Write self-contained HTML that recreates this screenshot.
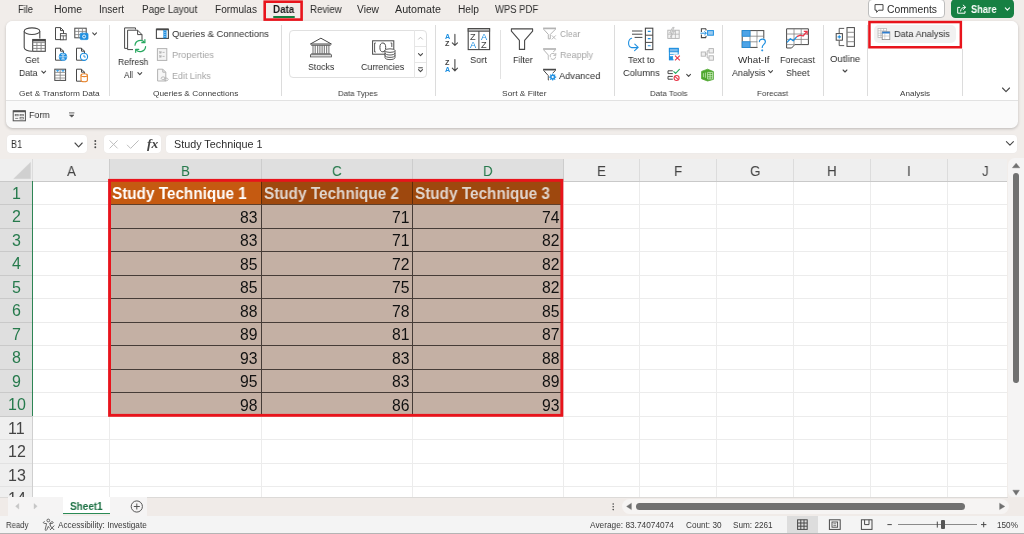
<!DOCTYPE html>
<html lang="en"><head><meta charset="utf-8"><title>Excel - Data Analysis</title>
<style>
html,body{margin:0;padding:0;}
body{width:1024px;height:534px;overflow:hidden;position:relative;background:#f1edea;font-family:"Liberation Sans",sans-serif;}
.t{will-change:transform;position:absolute;white-space:nowrap;line-height:1;transform-origin:0 50%;display:block;}
.r{position:absolute;box-sizing:border-box;}
svg{position:absolute;overflow:visible;}
</style></head><body>
<div id="tabs">
<span class="t " style="left:17.60px;top:5px;font-size:10px;color:#2b2b2b;transform:scaleX(0.9309);">File</span>
<span class="t " style="left:54.00px;top:5px;font-size:10px;color:#2b2b2b;transform:scaleX(1.0497);">Home</span>
<span class="t " style="left:98.80px;top:5px;font-size:10px;color:#2b2b2b;transform:scaleX(0.9836);">Insert</span>
<span class="t " style="left:141.90px;top:5px;font-size:10px;color:#2b2b2b;transform:scaleX(0.9847);">Page Layout</span>
<span class="t " style="left:214.80px;top:5px;font-size:10px;color:#2b2b2b;transform:scaleX(1.0078);">Formulas</span>
<span class="t " style="left:309.50px;top:5px;font-size:10px;color:#2b2b2b;transform:scaleX(0.9699);">Review</span>
<span class="t " style="left:357.00px;top:5px;font-size:10px;color:#2b2b2b;transform:scaleX(1.0235);">View</span>
<span class="t " style="left:395.30px;top:5px;font-size:10px;color:#2b2b2b;transform:scaleX(1.0724);">Automate</span>
<span class="t " style="left:458.00px;top:5px;font-size:10px;color:#2b2b2b;transform:scaleX(1.0211);">Help</span>
<span class="t " style="left:494.50px;top:5px;font-size:10px;color:#2b2b2b;transform:scaleX(0.9461);">WPS PDF</span>
<span class="t " style="left:273.00px;top:5px;font-size:10px;color:#1a1a1a;font-weight:700;transform:scaleX(0.9781);">Data</span>
<div class="r " style="left:272.6px;top:16.4px;width:22.2px;height:1.7px;background:#16803f;border-radius:1px;"></div>
<div class="r " style="left:868px;top:-1px;width:76.5px;height:18.6px;background:#ffffff;border:1px solid #bdbdbd;border-radius:4px;"></div>
<span class="t " style="left:887.10px;top:5px;font-size:10px;color:#2b2b2b;transform:scaleX(1.0342);">Comments</span>
<div class="r " style="left:951.2px;top:-1px;width:63.3px;height:18.7px;background:#178043;border-radius:4.5px;"></div>
<span class="t " style="left:970.50px;top:5px;font-size:10px;color:#ffffff;font-weight:700;transform:scaleX(0.9211);">Share</span>
</div>
<div id="ribbon">
<div class="r " style="left:6.4px;top:21px;width:1011.7px;height:107.2px;background:#fafafa;border-radius:6.5px;box-shadow:0 1px 3px rgba(0,0,0,.22);"></div>
<div class="r " style="left:6.4px;top:21px;width:1011.7px;height:79.5px;background:#ffffff;border-radius:6.5px 6.5px 0 0;"></div>
<div class="r " style="left:6.4px;top:100px;width:1011.7px;height:1px;background:#e2e2e2;"></div>
<div class="r " style="left:109.2px;top:25px;width:1px;height:70.5px;background:#dcdcdc;"></div>
<div class="r " style="left:281.1px;top:25px;width:1px;height:70.5px;background:#dcdcdc;"></div>
<div class="r " style="left:434.5px;top:25px;width:1px;height:70.5px;background:#dcdcdc;"></div>
<div class="r " style="left:613.9px;top:25px;width:1px;height:70.5px;background:#dcdcdc;"></div>
<div class="r " style="left:721.8px;top:25px;width:1px;height:70.5px;background:#dcdcdc;"></div>
<div class="r " style="left:822.7px;top:25px;width:1px;height:70.5px;background:#dcdcdc;"></div>
<div class="r " style="left:867.1px;top:25px;width:1px;height:70.5px;background:#dcdcdc;"></div>
<div class="r " style="left:962px;top:49px;width:1px;height:46.5px;background:#dcdcdc;"></div>
<div class="r " style="left:500.2px;top:30px;width:1px;height:49px;background:#e2e2e2;"></div>
<span class="t " style="left:18.80px;top:90px;font-size:8.1px;color:#3a3a3a;transform:scaleX(1.0257);">Get &amp; Transform Data</span>
<span class="t " style="left:152.60px;top:90px;font-size:8.1px;color:#3a3a3a;transform:scaleX(1.0253);">Queries &amp; Connections</span>
<span class="t " style="left:338.30px;top:90px;font-size:8.1px;color:#3a3a3a;transform:scaleX(0.9651);">Data Types</span>
<span class="t " style="left:502.00px;top:90px;font-size:8.1px;color:#3a3a3a;transform:scaleX(1.0431);">Sort &amp; Filter</span>
<span class="t " style="left:649.50px;top:90px;font-size:8.1px;color:#3a3a3a;transform:scaleX(0.9837);">Data Tools</span>
<span class="t " style="left:757.00px;top:90px;font-size:8.1px;color:#3a3a3a;transform:scaleX(0.9838);">Forecast</span>
<span class="t " style="left:900.30px;top:90px;font-size:8.1px;color:#3a3a3a;transform:scaleX(0.9847);">Analysis</span>
<span class="t " style="left:25.10px;top:55px;font-size:9.8px;color:#2e2e2e;transform:scaleX(0.8990);">Get</span>
<span class="t " style="left:19.00px;top:68px;font-size:9.8px;color:#2e2e2e;transform:scaleX(0.8889);">Data</span>
<span class="t " style="left:118.20px;top:57px;font-size:9.8px;color:#2e2e2e;transform:scaleX(0.8859);">Refresh</span>
<span class="t " style="left:124.00px;top:70px;font-size:9.8px;color:#2e2e2e;transform:scaleX(0.8447);">All</span>
<span class="t " style="left:172.00px;top:29px;font-size:9.8px;color:#2e2e2e;transform:scaleX(0.9625);">Queries &amp; Connections</span>
<span class="t " style="left:172.00px;top:50px;font-size:9.8px;color:#a6a6a6;transform:scaleX(0.9381);">Properties</span>
<span class="t " style="left:172.00px;top:71px;font-size:9.8px;color:#a6a6a6;transform:scaleX(0.9132);">Edit Links</span>
<div class="r " style="left:289px;top:29.6px;width:137.7px;height:48.7px;background:#ffffff;border:1px solid #e0e0e0;border-radius:4px;"></div>
<div class="r " style="left:414.2px;top:30px;width:1px;height:48px;background:#e6e6e6;"></div>
<div class="r " style="left:414.6px;top:46px;width:11.5px;height:1px;background:#e6e6e6;"></div>
<div class="r " style="left:414.6px;top:62px;width:11.5px;height:1px;background:#e6e6e6;"></div>
<span class="t " style="left:308.00px;top:62px;font-size:9.8px;color:#2e2e2e;transform:scaleX(0.8943);">Stocks</span>
<span class="t " style="left:361.40px;top:62px;font-size:9.8px;color:#2e2e2e;transform:scaleX(0.9117);">Currencies</span>
<span class="t " style="left:470.30px;top:55px;font-size:9.8px;color:#2e2e2e;transform:scaleX(0.9459);">Sort</span>
<span class="t " style="left:512.50px;top:55px;font-size:9.8px;color:#2e2e2e;transform:scaleX(0.9092);">Filter</span>
<span class="t " style="left:559.70px;top:29px;font-size:9.8px;color:#a6a6a6;transform:scaleX(0.8583);">Clear</span>
<span class="t " style="left:559.70px;top:50px;font-size:9.8px;color:#a6a6a6;transform:scaleX(0.9206);">Reapply</span>
<span class="t " style="left:559.30px;top:71px;font-size:9.8px;color:#2e2e2e;transform:scaleX(0.9475);">Advanced</span>
<span class="t " style="left:628.40px;top:55px;font-size:9.8px;color:#2e2e2e;transform:scaleX(0.9179);">Text to</span>
<span class="t " style="left:623.00px;top:68px;font-size:9.8px;color:#2e2e2e;transform:scaleX(0.9542);">Columns</span>
<span class="t " style="left:737.50px;top:55px;font-size:9.8px;color:#2e2e2e;transform:scaleX(0.9847);">What-If</span>
<span class="t " style="left:731.60px;top:68px;font-size:9.8px;color:#2e2e2e;transform:scaleX(0.9153);">Analysis</span>
<span class="t " style="left:780.10px;top:55px;font-size:9.8px;color:#2e2e2e;transform:scaleX(0.9128);">Forecast</span>
<span class="t " style="left:785.80px;top:68px;font-size:9.8px;color:#2e2e2e;transform:scaleX(0.9059);">Sheet</span>
<span class="t " style="left:830.00px;top:54px;font-size:9.8px;color:#2e2e2e;transform:scaleX(0.9758);">Outline</span>
<div class="r " style="left:874.4px;top:25.1px;width:82.1px;height:17.5px;background:#f1f1f1;border-radius:5px;"></div>
<span class="t " style="left:893.50px;top:29px;font-size:9.8px;color:#2e2e2e;transform:scaleX(0.9381);">Data Analysis</span>
<span class="t " style="left:29.40px;top:110px;font-size:9.8px;color:#2e2e2e;transform:scaleX(0.9097);">Form</span>
</div>
<div id="formulabar">
<div class="r " style="left:7.2px;top:135.3px;width:79.6px;height:17.5px;background:#ffffff;border-radius:4px;box-shadow:0 0 0 .5px #ece9e7;"></div>
<span class="t " style="left:10.90px;top:140px;font-size:10.4px;color:#2e2e2e;transform:scaleX(0.8726);">B1</span>
<div class="r " style="left:103.75px;top:135.3px;width:57.6px;height:17.5px;background:#ffffff;border-radius:4px;box-shadow:0 0 0 .5px #ece9e7;"></div>
<div class="r " style="left:165.9px;top:135.3px;width:851.2px;height:17.5px;background:#ffffff;border-radius:4px;box-shadow:0 0 0 .5px #ece9e7;"></div>
<span class="t " style="left:174.30px;top:140px;font-size:10.4px;color:#2e2e2e;transform:scaleX(1.0377);">Study Technique 1</span>
</div>
<div id="grid">
<div class="r " style="left:0px;top:159px;width:1007px;height:338px;background:#ffffff;"></div>
<div class="r " style="left:0px;top:159px;width:1007px;height:22px;background:#efefef;"></div>
<div class="r " style="left:0px;top:181px;width:32.6px;height:316px;background:#efefef;"></div>
<div class="r " style="left:109.5px;top:159px;width:453.5px;height:22px;background:#dfdfdf;"></div>
<div class="r " style="left:0px;top:181px;width:32.6px;height:235px;background:#dfdfdf;"></div>
<div class="r " style="left:32.1px;top:181px;width:1px;height:316px;background:#ececec;"></div>
<div class="r " style="left:32.1px;top:159px;width:1px;height:22px;background:#dcdcdc;"></div>
<div class="r " style="left:109.0px;top:181px;width:1px;height:316px;background:#ececec;"></div>
<div class="r " style="left:109.0px;top:159px;width:1px;height:22px;background:#cdcdcd;"></div>
<div class="r " style="left:260.75px;top:181px;width:1px;height:316px;background:#ececec;"></div>
<div class="r " style="left:260.75px;top:159px;width:1px;height:22px;background:#cdcdcd;"></div>
<div class="r " style="left:412.0px;top:181px;width:1px;height:316px;background:#ececec;"></div>
<div class="r " style="left:412.0px;top:159px;width:1px;height:22px;background:#cdcdcd;"></div>
<div class="r " style="left:562.5px;top:181px;width:1px;height:316px;background:#ececec;"></div>
<div class="r " style="left:562.5px;top:159px;width:1px;height:22px;background:#cdcdcd;"></div>
<div class="r " style="left:639.0px;top:181px;width:1px;height:316px;background:#ececec;"></div>
<div class="r " style="left:639.0px;top:159px;width:1px;height:22px;background:#dcdcdc;"></div>
<div class="r " style="left:716.0px;top:181px;width:1px;height:316px;background:#ececec;"></div>
<div class="r " style="left:716.0px;top:159px;width:1px;height:22px;background:#dcdcdc;"></div>
<div class="r " style="left:793.0px;top:181px;width:1px;height:316px;background:#ececec;"></div>
<div class="r " style="left:793.0px;top:159px;width:1px;height:22px;background:#dcdcdc;"></div>
<div class="r " style="left:869.5px;top:181px;width:1px;height:316px;background:#ececec;"></div>
<div class="r " style="left:869.5px;top:159px;width:1px;height:22px;background:#dcdcdc;"></div>
<div class="r " style="left:946.5px;top:181px;width:1px;height:316px;background:#ececec;"></div>
<div class="r " style="left:946.5px;top:159px;width:1px;height:22px;background:#dcdcdc;"></div>
<div class="r " style="left:32.6px;top:180.5px;width:974.4px;height:1px;background:#ececec;"></div>
<div class="r " style="left:0px;top:180.5px;width:32.6px;height:1px;background:#c9c9c9;"></div>
<div class="r " style="left:32.6px;top:204.0px;width:974.4px;height:1px;background:#ececec;"></div>
<div class="r " style="left:0px;top:204.0px;width:32.6px;height:1px;background:#c9c9c9;"></div>
<div class="r " style="left:32.6px;top:227.5px;width:974.4px;height:1px;background:#ececec;"></div>
<div class="r " style="left:0px;top:227.5px;width:32.6px;height:1px;background:#c9c9c9;"></div>
<div class="r " style="left:32.6px;top:251.0px;width:974.4px;height:1px;background:#ececec;"></div>
<div class="r " style="left:0px;top:251.0px;width:32.6px;height:1px;background:#c9c9c9;"></div>
<div class="r " style="left:32.6px;top:274.5px;width:974.4px;height:1px;background:#ececec;"></div>
<div class="r " style="left:0px;top:274.5px;width:32.6px;height:1px;background:#c9c9c9;"></div>
<div class="r " style="left:32.6px;top:298.0px;width:974.4px;height:1px;background:#ececec;"></div>
<div class="r " style="left:0px;top:298.0px;width:32.6px;height:1px;background:#c9c9c9;"></div>
<div class="r " style="left:32.6px;top:321.5px;width:974.4px;height:1px;background:#ececec;"></div>
<div class="r " style="left:0px;top:321.5px;width:32.6px;height:1px;background:#c9c9c9;"></div>
<div class="r " style="left:32.6px;top:345.0px;width:974.4px;height:1px;background:#ececec;"></div>
<div class="r " style="left:0px;top:345.0px;width:32.6px;height:1px;background:#c9c9c9;"></div>
<div class="r " style="left:32.6px;top:368.5px;width:974.4px;height:1px;background:#ececec;"></div>
<div class="r " style="left:0px;top:368.5px;width:32.6px;height:1px;background:#c9c9c9;"></div>
<div class="r " style="left:32.6px;top:392.0px;width:974.4px;height:1px;background:#ececec;"></div>
<div class="r " style="left:0px;top:392.0px;width:32.6px;height:1px;background:#c9c9c9;"></div>
<div class="r " style="left:32.6px;top:415.5px;width:974.4px;height:1px;background:#ececec;"></div>
<div class="r " style="left:0px;top:415.5px;width:32.6px;height:1px;background:#c9c9c9;"></div>
<div class="r " style="left:32.6px;top:439.0px;width:974.4px;height:1px;background:#ececec;"></div>
<div class="r " style="left:0px;top:439.0px;width:32.6px;height:1px;background:#e2e2e2;"></div>
<div class="r " style="left:32.6px;top:462.5px;width:974.4px;height:1px;background:#ececec;"></div>
<div class="r " style="left:0px;top:462.5px;width:32.6px;height:1px;background:#e2e2e2;"></div>
<div class="r " style="left:32.6px;top:486.0px;width:974.4px;height:1px;background:#ececec;"></div>
<div class="r " style="left:0px;top:486.0px;width:32.6px;height:1px;background:#e2e2e2;"></div>
<div class="r " style="left:32.6px;top:509.5px;width:974.4px;height:1px;background:#ececec;"></div>
<div class="r " style="left:0px;top:509.5px;width:32.6px;height:1px;background:#e2e2e2;"></div>
<div class="r " style="left:0px;top:180.5px;width:1007px;height:1px;background:#c9c9c9;"></div>
<div class="r " style="left:32.1px;top:181px;width:1px;height:316px;background:#cfcfcf;"></div>
<div class="r " style="left:109.5px;top:180px;width:453.5px;height:1.5px;background:#8fbf9f;"></div>
<div class="r " style="left:31.9px;top:181px;width:1.5px;height:235px;background:#2e8555;"></div>
<span class="t " style="left:66.69px;top:163px;font-size:15.2px;color:#444444;transform:scaleX(0.8800);">A</span>
<span class="t " style="left:181.01px;top:163px;font-size:15.2px;color:#267a4c;transform:scaleX(0.8800);">B</span>
<span class="t " style="left:332.15px;top:163px;font-size:15.2px;color:#267a4c;transform:scaleX(0.8800);">C</span>
<span class="t " style="left:483.02px;top:163px;font-size:15.2px;color:#267a4c;transform:scaleX(0.8800);">D</span>
<span class="t " style="left:596.89px;top:163px;font-size:15.2px;color:#444444;transform:scaleX(0.8800);">E</span>
<span class="t " style="left:674.01px;top:163px;font-size:15.2px;color:#444444;transform:scaleX(0.8800);">F</span>
<span class="t " style="left:749.90px;top:163px;font-size:15.2px;color:#444444;transform:scaleX(0.8800);">G</span>
<span class="t " style="left:827.02px;top:163px;font-size:15.2px;color:#444444;transform:scaleX(0.8800);">H</span>
<span class="t " style="left:906.74px;top:163px;font-size:15.2px;color:#444444;transform:scaleX(0.8800);">I</span>
<span class="t " style="left:982.26px;top:163px;font-size:15.2px;color:#444444;transform:scaleX(0.8800);">J</span>
<span class="t " style="left:11.95px;top:186px;font-size:16px;color:#267a4c;">1</span>
<span class="t " style="left:11.95px;top:209px;font-size:16px;color:#267a4c;">2</span>
<span class="t " style="left:11.95px;top:233px;font-size:16px;color:#267a4c;">3</span>
<span class="t " style="left:11.95px;top:256px;font-size:16px;color:#267a4c;">4</span>
<span class="t " style="left:11.95px;top:280px;font-size:16px;color:#267a4c;">5</span>
<span class="t " style="left:11.95px;top:303px;font-size:16px;color:#267a4c;">6</span>
<span class="t " style="left:11.95px;top:327px;font-size:16px;color:#267a4c;">7</span>
<span class="t " style="left:11.95px;top:350px;font-size:16px;color:#267a4c;">8</span>
<span class="t " style="left:11.95px;top:374px;font-size:16px;color:#267a4c;">9</span>
<span class="t " style="left:7.50px;top:397px;font-size:16px;color:#267a4c;">10</span>
<span class="t " style="left:8.10px;top:421px;font-size:16px;color:#444444;">11</span>
<span class="t " style="left:7.50px;top:444px;font-size:16px;color:#444444;">12</span>
<span class="t " style="left:7.50px;top:468px;font-size:16px;color:#444444;">13</span>
<span class="t " style="left:7.50px;top:491px;font-size:16px;color:#444444;">14</span>
<div class="r " style="left:109.5px;top:181px;width:453.5px;height:235px;background:#c4b0a4;"></div>
<div class="r " style="left:109.5px;top:181px;width:151.75px;height:23.5px;background:#c55a11;"></div>
<div class="r " style="left:261.25px;top:181px;width:301.75px;height:23.5px;background:#9e480e;"></div>
<div class="r " style="left:260.75px;top:181px;width:1px;height:235px;background:#463c37;"></div>
<div class="r " style="left:260.75px;top:181px;width:1px;height:23.5px;background:#5e2c0a;"></div>
<div class="r " style="left:412.0px;top:181px;width:1px;height:235px;background:#463c37;"></div>
<div class="r " style="left:412.0px;top:181px;width:1px;height:23.5px;background:#5e2c0a;"></div>
<div class="r " style="left:109.5px;top:204.0px;width:453.5px;height:1px;background:#5f3f2b;"></div>
<div class="r " style="left:109.5px;top:227.5px;width:453.5px;height:1px;background:#463c37;"></div>
<div class="r " style="left:109.5px;top:251.0px;width:453.5px;height:1px;background:#463c37;"></div>
<div class="r " style="left:109.5px;top:274.5px;width:453.5px;height:1px;background:#463c37;"></div>
<div class="r " style="left:109.5px;top:298.0px;width:453.5px;height:1px;background:#463c37;"></div>
<div class="r " style="left:109.5px;top:321.5px;width:453.5px;height:1px;background:#463c37;"></div>
<div class="r " style="left:109.5px;top:345.0px;width:453.5px;height:1px;background:#463c37;"></div>
<div class="r " style="left:109.5px;top:368.5px;width:453.5px;height:1px;background:#463c37;"></div>
<div class="r " style="left:109.5px;top:392.0px;width:453.5px;height:1px;background:#463c37;"></div>
<span class="t " style="left:112.20px;top:186px;font-size:15.6px;color:#ffffff;font-weight:700;transform:scaleX(0.9802);">Study Technique 1</span>
<span class="t " style="left:263.50px;top:186px;font-size:15.6px;color:#e0d5cd;font-weight:700;transform:scaleX(0.9816);">Study Technique 2</span>
<span class="t " style="left:414.80px;top:186px;font-size:15.6px;color:#e0d5cd;font-weight:700;transform:scaleX(0.9816);">Study Technique 3</span>
<span class="t " style="left:240.39px;top:210px;font-size:15.7px;color:#111111;">83</span>
<span class="t " style="left:391.64px;top:210px;font-size:15.7px;color:#111111;">71</span>
<span class="t " style="left:542.14px;top:210px;font-size:15.7px;color:#111111;">74</span>
<span class="t " style="left:240.39px;top:233px;font-size:15.7px;color:#111111;">83</span>
<span class="t " style="left:391.64px;top:233px;font-size:15.7px;color:#111111;">71</span>
<span class="t " style="left:542.14px;top:233px;font-size:15.7px;color:#111111;">82</span>
<span class="t " style="left:240.39px;top:257px;font-size:15.7px;color:#111111;">85</span>
<span class="t " style="left:391.64px;top:257px;font-size:15.7px;color:#111111;">72</span>
<span class="t " style="left:542.14px;top:257px;font-size:15.7px;color:#111111;">82</span>
<span class="t " style="left:240.39px;top:280px;font-size:15.7px;color:#111111;">85</span>
<span class="t " style="left:391.64px;top:280px;font-size:15.7px;color:#111111;">75</span>
<span class="t " style="left:542.14px;top:280px;font-size:15.7px;color:#111111;">82</span>
<span class="t " style="left:240.39px;top:304px;font-size:15.7px;color:#111111;">88</span>
<span class="t " style="left:391.64px;top:304px;font-size:15.7px;color:#111111;">78</span>
<span class="t " style="left:542.14px;top:304px;font-size:15.7px;color:#111111;">85</span>
<span class="t " style="left:240.39px;top:327px;font-size:15.7px;color:#111111;">89</span>
<span class="t " style="left:391.64px;top:327px;font-size:15.7px;color:#111111;">81</span>
<span class="t " style="left:542.14px;top:327px;font-size:15.7px;color:#111111;">87</span>
<span class="t " style="left:240.39px;top:351px;font-size:15.7px;color:#111111;">93</span>
<span class="t " style="left:391.64px;top:351px;font-size:15.7px;color:#111111;">83</span>
<span class="t " style="left:542.14px;top:351px;font-size:15.7px;color:#111111;">88</span>
<span class="t " style="left:240.39px;top:374px;font-size:15.7px;color:#111111;">95</span>
<span class="t " style="left:391.64px;top:374px;font-size:15.7px;color:#111111;">83</span>
<span class="t " style="left:542.14px;top:374px;font-size:15.7px;color:#111111;">89</span>
<span class="t " style="left:240.39px;top:398px;font-size:15.7px;color:#111111;">98</span>
<span class="t " style="left:391.64px;top:398px;font-size:15.7px;color:#111111;">86</span>
<span class="t " style="left:542.14px;top:398px;font-size:15.7px;color:#111111;">93</span>
<div class="r " style="left:1007.6px;top:159px;width:16.4px;height:338px;background:#f1edea;"></div>
<div class="r " style="left:1008.4px;top:158.4px;width:16px;height:340px;background:#f5f4f4;border-radius:7px 0 0 7px;"></div>
<div class="r " style="left:1013.1px;top:172.6px;width:5.9px;height:210.3px;background:#717171;border-radius:3px;"></div>
</div>
<div id="sheettabs">
<div class="r " style="left:0px;top:497px;width:1024px;height:19px;background:#f0ebe8;"></div>
<div class="r " style="left:0px;top:497px;width:1008px;height:1px;background:#dcdad8;"></div>
<div class="r " style="left:8.4px;top:497px;width:54.9px;height:19px;background:#f5f4f4;"></div>
<div class="r " style="left:63.3px;top:497px;width:46.9px;height:17px;background:#ffffff;"></div>
<div class="r " style="left:63.3px;top:513px;width:46.9px;height:1.4px;background:#2a8a55;"></div>
<div class="r " style="left:110.2px;top:497px;width:36.6px;height:19px;background:#f5f4f4;"></div>
<span class="t " style="left:69.80px;top:501px;font-size:10.6px;color:#1f7246;font-weight:700;transform:scaleX(0.9407);">Sheet1</span>
<div class="r " style="left:622.4px;top:498.6px;width:386.3px;height:15.4px;background:#f6f4f3;border-radius:8px;"></div>
<div class="r " style="left:636.2px;top:503px;width:328.5px;height:6.8px;background:#717171;border-radius:4px;"></div>
</div>
<div id="status">
<div class="r " style="left:0px;top:516px;width:1024px;height:18px;background:#f4f4f4;"></div>
<div class="r " style="left:0px;top:533px;width:1024px;height:1px;background:#b4b4b4;"></div>
<span class="t " style="left:6.30px;top:522px;font-size:8.2px;color:#3a3a3a;transform:scaleX(0.9492);">Ready</span>
<span class="t " style="left:57.60px;top:522px;font-size:8.2px;color:#3a3a3a;transform:scaleX(0.9947);">Accessibility: Investigate</span>
<span class="t " style="left:589.50px;top:522px;font-size:8.2px;color:#3a3a3a;transform:scaleX(1.0141);">Average: 83.74074074</span>
<span class="t " style="left:685.50px;top:522px;font-size:8.2px;color:#3a3a3a;">Count: 30</span>
<span class="t " style="left:732.50px;top:522px;font-size:8.2px;color:#3a3a3a;">Sum: 2261</span>
<div class="r " style="left:787px;top:516px;width:31px;height:17px;background:#dddddd;"></div>
<span class="t " style="left:997.00px;top:522px;font-size:8.2px;color:#3a3a3a;">150%</span>
<div class="r " style="left:898px;top:524.2px;width:78.6px;height:1px;background:#8a8a8a;"></div>
<div class="r " style="left:940.8px;top:520.2px;width:4.3px;height:9.1px;background:#555555;border-radius:1px;"></div>
</div>
<svg id="icons" width="1024" height="534" viewBox="0 0 1024 534" style="left:0;top:0;pointer-events:none;"><path d="M24.2 31.2V47.5C24.2 49.6 27.9 51.2 32 51.2M39.8 31.2V38.5" stroke="#484848" fill="none" stroke-width="1.1" />
<ellipse cx="32" cy="31.2" rx="7.8" ry="3.3" stroke="#484848" fill="#ffffff" stroke-width="1.1"/>
<rect x="32.7" y="39.5" width="12.6" height="11.8" stroke="#484848" fill="#ffffff" stroke-width="1.1" rx="0"/>
<path d="M32.7 42.6H45.3M32.7 45.5H45.3M32.7 48.4H45.3M36.9 42.6V51.3M41.1 42.6V51.3" stroke="#808080" fill="none" stroke-width="0.9" />
<path d="M32.7 40.6H45.3" stroke="#484848" fill="none" stroke-width="1.6" />
<path d="M41.800000000000004 71.1L43.7 73.1L45.6 71.1" stroke="#484848" fill="none" stroke-width="1.1" stroke-linecap="round" stroke-linejoin="round"/>
<path d="M55.5 27.6H60.5L63.5 30.6V39.6H55.5Z" stroke="#484848" fill="#ffffff" stroke-width="1" stroke-linejoin="round"/>
<path d="M60.5 27.6V30.6H63.5" stroke="#484848" fill="none" stroke-width="1" stroke-linejoin="round"/>
<rect x="60.4" y="33.6" width="5.8" height="6.2" stroke="#484848" fill="#ffffff" stroke-width="0.9" rx="0"/>
<path d="M60.4 35.8H66.2M63.3 35.8V39.8" stroke="#484848" fill="none" stroke-width="0.8" />
<rect x="74.8" y="28.2" width="11.4" height="9.6" stroke="#484848" fill="#ffffff" stroke-width="1" rx="0"/>
<path d="M74.8 31.4H86.2M74.8 34.6H80M78.6 28.2V37.8M82.4 28.2V33" stroke="#808080" fill="none" stroke-width="0.8" />
<rect x="80.2" y="33.2" width="7.8" height="6.4" stroke="#1e8fe0" fill="#1e8fe0" stroke-width="0.8" rx="1"/>
<circle cx="84.1" cy="36.5" r="1.5" stroke="#fff" fill="none" stroke-width="0.9"/>
<path d="M92.69999999999999 32.8L94.6 34.8L96.5 32.8" stroke="#484848" fill="none" stroke-width="1.1" stroke-linecap="round" stroke-linejoin="round"/>
<path d="M55.5 48.2H60.5L63.5 51.2V60.2H55.5Z" stroke="#484848" fill="#ffffff" stroke-width="1" stroke-linejoin="round"/>
<path d="M60.5 48.2V51.2H63.5" stroke="#484848" fill="none" stroke-width="1" stroke-linejoin="round"/>
<circle cx="63" cy="56.8" r="3.9" stroke="#1e8fe0" fill="#1e8fe0" stroke-width="0.6"/>
<path d="M59.2 56.8H66.8M63 53V60.6M61 54.2C62 55.2 64 55.2 65 54.2M61 59.4C62 58.4 64 58.4 65 59.4" stroke="#fff" fill="none" stroke-width="0.6" />
<path d="M76.5 48.2H81.5L84.5 51.2V60.2H76.5Z" stroke="#484848" fill="#ffffff" stroke-width="1" stroke-linejoin="round"/>
<path d="M81.5 48.2V51.2H84.5" stroke="#484848" fill="none" stroke-width="1" stroke-linejoin="round"/>
<circle cx="84" cy="56.8" r="3.6" stroke="#1e8fe0" fill="#ffffff" stroke-width="1.1"/>
<path d="M84 54.8V57H85.8" stroke="#1e8fe0" fill="none" stroke-width="0.9" />
<rect x="54.8" y="69.2" width="10.8" height="11.2" stroke="#484848" fill="#ffffff" stroke-width="1" rx="0"/>
<path d="M54.8 72.4H65.6M54.8 75.2H65.6M54.8 78H65.6M60.2 69.2V80.4" stroke="#808080" fill="none" stroke-width="0.8" />
<path d="M56.2 70.2H59L57.6 71.8ZM61.6 70.2H64.4L63 71.8Z" stroke="#1e8fe0" fill="#1e8fe0" stroke-width="0.4" />
<path d="M76.5 69.2H81.5L84.5 72.2V81.2H76.5Z" stroke="#484848" fill="#ffffff" stroke-width="1" stroke-linejoin="round"/>
<path d="M81.5 69.2V72.2H84.5" stroke="#484848" fill="none" stroke-width="1" stroke-linejoin="round"/>
<path d="M81 75.2V80.2C81 81.2 82.4 81.8 84.2 81.8S87.4 81.2 87.4 80.2V75.2" stroke="#e8832a" fill="#ffffff" stroke-width="1.1" />
<ellipse cx="84.2" cy="75.2" rx="3.2" ry="1.4" stroke="#e8832a" fill="#ffffff" stroke-width="1.1"/>
<path d="M135.5 29.5V27.9H124.6V48.4H127" stroke="#484848" fill="none" stroke-width="1" />
<path d="M127.6 30.2H137.6L142 34.6V40M127.6 30.2V49.6H133" stroke="#484848" fill="none" stroke-width="1" />
<path d="M137.6 30.2V34.6H142" stroke="#484848" fill="none" stroke-width="1" />
<path d="M135 45.2A5.4 5.4 0 0 1 144.6 42.4M145.6 46.6A5.4 5.4 0 0 1 136 49.6" stroke="#27a85f" fill="none" stroke-width="1.2" stroke-linecap="round"/>
<path d="M144.9 39.6V42.7H141.8M135.7 52.3V49.3H138.8" stroke="#27a85f" fill="none" stroke-width="1.2" stroke-linecap="round" stroke-linejoin="round"/>
<path d="M137.9 72.6L139.8 74.6L141.70000000000002 72.6" stroke="#484848" fill="none" stroke-width="1.1" stroke-linecap="round" stroke-linejoin="round"/>
<rect x="156.4" y="29.2" width="12" height="9.2" stroke="#484848" fill="#ffffff" stroke-width="1.1" rx="0"/>
<path d="M156.4 29.4H168.4" stroke="#484848" fill="none" stroke-width="1.8" />
<rect x="163.6" y="30.6" width="2.6" height="7.4" stroke="#1e8fe0" fill="#1e8fe0" stroke-width="0.4" rx="0"/>
<path d="M164.2 32.4H165.6M164.2 34.4H165.6M164.2 36.4H165.6" stroke="#fff" fill="none" stroke-width="0.6" />
<rect x="157.4" y="48.6" width="9.4" height="11.8" stroke="#b3b3b3" fill="#f4f4f4" stroke-width="1" rx="0"/>
<rect x="159.6" y="51.6" width="1.6" height="1.6" stroke="#b3b3b3" fill="#b3b3b3" stroke-width="0.4" rx="0"/>
<rect x="159.6" y="55.6" width="1.6" height="1.6" stroke="#b3b3b3" fill="#b3b3b3" stroke-width="0.4" rx="0"/>
<path d="M162.6 52.4H164.6M162.6 56.4H164.6" stroke="#b3b3b3" fill="none" stroke-width="0.9" />
<path d="M157.6 69.2H162.79999999999998L165.79999999999998 72.2V81.0H157.6Z" stroke="#b3b3b3" fill="#f6f6f6" stroke-width="1" stroke-linejoin="round"/>
<path d="M162.79999999999998 69.2V72.2H165.79999999999998" stroke="#b3b3b3" fill="none" stroke-width="1" stroke-linejoin="round"/>
<path d="M161.2 78.2C161.2 76.4 165.2 76.4 165.2 78.2S161.2 80.2 161.2 78.2M164 79.4C164 77.6 168.2 77.6 168.2 79.4S164 81.4 164 79.4" stroke="#b3b3b3" fill="none" stroke-width="0.9" />
<path d="M310.4 44L320.9 38.2L331.4 44Z" stroke="#484848" fill="#ffffff" stroke-width="1" stroke-linejoin="round"/>
<path d="M313 45.6V53.4M315.2 45.6V53.4M317.7 45.6V53.4M319.9 45.6V53.4M322.1 45.6V53.4M324.3 45.6V53.4M326.7 45.6V53.4M328.9 45.6V53.4" stroke="#484848" fill="none" stroke-width="0.8" />
<path d="M311.2 45.3H330.6M311.2 53.8H330.6" stroke="#484848" fill="none" stroke-width="0.9" />
<rect x="310.4" y="54.8" width="21" height="2.1" stroke="#484848" fill="#ffffff" stroke-width="0.8" rx="0"/>
<rect x="372.6" y="40.8" width="21.2" height="13.4" stroke="#484848" fill="#ffffff" stroke-width="1" rx="0"/>
<path d="M375.8 43H374.6V52H375.8M390.6 43H391.8V47" stroke="#484848" fill="none" stroke-width="0.9" />
<ellipse cx="382.8" cy="47.4" rx="2.9" ry="4.4" stroke="#484848" fill="none" stroke-width="1"/>
<path d="M385 50.6V57.6C385 58.8 387.2 59.6 390 59.6S395 58.8 395 57.6V50.6" stroke="#484848" fill="#ffffff" stroke-width="0.9" />
<path d="M385 53C385 54.2 387.2 55 390 55S395 54.2 395 53M385 55.4C385 56.6 387.2 57.4 390 57.4S395 56.6 395 55.4" stroke="#484848" fill="none" stroke-width="0.9" />
<ellipse cx="390" cy="50.6" rx="5" ry="1.8" stroke="#484848" fill="#ffffff" stroke-width="0.9"/>
<path d="M418.5 39.2L420.5 37.2L422.5 39.2" stroke="#bcbcbc" fill="none" stroke-width="1" stroke-linecap="round" stroke-linejoin="round"/>
<path d="M418.5 53.6L420.5 55.6L422.5 53.6" stroke="#484848" fill="none" stroke-width="1.1" stroke-linecap="round" stroke-linejoin="round"/>
<path d="M418.2 67.8H422.8" stroke="#484848" fill="none" stroke-width="1" />
<path d="M418.5 69.6L420.5 71.6L422.5 69.6" stroke="#484848" fill="none" stroke-width="1.1" stroke-linecap="round" stroke-linejoin="round"/>
<path d="M454.9 34.4V45.2M452.3 42.8L454.9 45.4L457.5 42.8" stroke="#484848" fill="none" stroke-width="1.1" stroke-linecap="round" stroke-linejoin="round"/>
<path d="M454.9 59.6V70.6M452.3 68.2L454.9 70.8L457.5 68.2" stroke="#484848" fill="none" stroke-width="1.1" stroke-linecap="round" stroke-linejoin="round"/>
<rect x="468.2" y="28.6" width="21.4" height="21" stroke="#484848" fill="#ffffff" stroke-width="1.1" rx="0"/>
<rect x="468.2" y="28.6" width="21.4" height="2.6" stroke="#484848" fill="#c4c4c4" stroke-width="1" rx="0"/>
<path d="M478.9 31V49.6" stroke="#484848" fill="none" stroke-width="1" />
<path d="M511.4 28.9H532.6V31.2L524.6 40.4V49.4H519.4V40.4L511.4 31.2Z" stroke="#484848" fill="#ffffff" stroke-width="1.1" stroke-linejoin="round"/>
<path d="M543.1 28.400000000000002H556.0" stroke="#b3b3b3" fill="none" stroke-width="1.7" />
<path d="M543.6 29.200000000000003L548.3000000000001 34.4V38.8H550.3000000000001V34.4L555.5 29.200000000000003" stroke="#b3b3b3" fill="none" stroke-width="1" stroke-linejoin="round"/>
<path d="M551.8 35.4L555.8 39.4M555.8 35.4L551.8 39.4" stroke="#b3b3b3" fill="none" stroke-width="0.9" />
<path d="M543.1 49.0H556.0" stroke="#b3b3b3" fill="none" stroke-width="1.7" />
<path d="M543.6 49.800000000000004L548.3000000000001 55.0V59.400000000000006H550.3000000000001V55.0L555.5 49.800000000000004" stroke="#b3b3b3" fill="none" stroke-width="1" stroke-linejoin="round"/>
<rect x="548.8" y="52" width="8" height="8.6" stroke="none" fill="#ffffff" stroke-width="0" rx="0"/>
<path d="M550.4 57.2A2.7 2.7 0 1 1 555.4 55.2M555.8 53V55.4H553.4" stroke="#b3b3b3" fill="none" stroke-width="0.9" />
<path d="M555.6 56.6A2.7 2.7 0 0 1 550.8 58.4" stroke="#b3b3b3" fill="none" stroke-width="0.9" />
<path d="M543.1 69.6H556.0" stroke="#484848" fill="none" stroke-width="1.7" />
<path d="M543.6 70.39999999999999L548.3000000000001 75.6V80.0H550.3000000000001V75.6L555.5 70.39999999999999" stroke="#484848" fill="none" stroke-width="1" stroke-linejoin="round"/>
<rect x="548.9" y="73" width="7.6" height="8.2" stroke="none" fill="#ffffff" stroke-width="0" rx="0"/>
<circle cx="552.7" cy="77.1" r="2.3" stroke="#1e8fe0" fill="#1e8fe0" stroke-width="0.6"/>
<path d="M552.7 73.6V80.6M549.2 77.1H556.2M550.2 74.6L555.2 79.6M555.2 74.6L550.2 79.6" stroke="#1e8fe0" fill="none" stroke-width="1.1" />
<circle cx="552.7" cy="77.1" r="1" stroke="#fff" fill="#fff" stroke-width="0.2"/>
<path d="M632 31H642.4M632 34.2H642.4M634.6 37.4H642.4" stroke="#484848" fill="none" stroke-width="1" />
<path d="M631.6 38.2C627.6 39.6 627.6 46.4 631.4 47.6L637.6 47.4M634.8 44.2L638.2 47.4L634.6 50.6" stroke="#1e8fe0" fill="none" stroke-width="1.1" stroke-linecap="round" stroke-linejoin="round"/>
<rect x="645.4" y="28.2" width="7.4" height="21.4" stroke="#484848" fill="#ffffff" stroke-width="1.1" rx="0"/>
<path d="M645.4 35.2H652.8M645.4 42.4H652.8" stroke="#484848" fill="none" stroke-width="1" />
<path d="M647.8 31.4H650.6M647.8 38.6H650.6M647.8 45.8H650.6" stroke="#1e8fe0" fill="none" stroke-width="1.1" />
<rect x="667.8" y="30.2" width="11.4" height="8.2" stroke="#b3b3b3" fill="#f4f4f4" stroke-width="0.9" rx="0"/>
<path d="M667.8 34.2H679.2M671.6 30.2V38.4M675.4 30.2V38.4" stroke="#b3b3b3" fill="none" stroke-width="0.8" />
<path d="M672.6 27.4L669.6 33H671.8L670.4 37.4L674.6 31.4H672.2L674.2 27.4Z" stroke="#b3b3b3" fill="#dcdcdc" stroke-width="0.7" />
<rect x="669.4" y="48.4" width="8.8" height="11.4" stroke="#1e8fe0" fill="#ffffff" stroke-width="1" rx="0"/>
<rect x="669.4" y="48.4" width="8.8" height="3.4" stroke="#1e8fe0" fill="#7ab8ea" stroke-width="1" rx="0"/>
<rect x="669.4" y="56.6" width="3.4" height="3.2" stroke="#1e8fe0" fill="#1e8fe0" stroke-width="0.6" rx="0"/>
<path d="M669.4 54.4H678.2" stroke="#1e8fe0" fill="none" stroke-width="0.8" />
<rect x="673.6" y="54.4" width="7.4" height="7" stroke="none" fill="#ffffff" stroke-width="0" rx="0"/>
<path d="M675 55.6L679.8 60.4M679.8 55.6L675 60.4" stroke="#e8384a" fill="none" stroke-width="1.1" />
<path d="M672.8 70.8H668V73.6H672.8M672.8 76.4H668V79.2H672.8" stroke="#484848" fill="none" stroke-width="1" />
<path d="M673.8 71.6L675.6 73.4L679.4 69.4" stroke="#27a85f" fill="none" stroke-width="1.1" stroke-linecap="round" stroke-linejoin="round"/>
<circle cx="676.6" cy="78" r="2.5" stroke="#e8384a" fill="none" stroke-width="1.1"/>
<path d="M674.9 76.3L678.3 79.7" stroke="#e8384a" fill="none" stroke-width="1.1" />
<path d="M686.7 74.4L688.6 76.4L690.5 74.4" stroke="#484848" fill="none" stroke-width="1.1" stroke-linecap="round" stroke-linejoin="round"/>
<path d="M706 28.8H701.4V32M701.4 34.6V37.6H706" stroke="#484848" fill="none" stroke-width="1.1" />
<path d="M706 28.8V30.6M706 37.6V35.8" stroke="#484848" fill="none" stroke-width="1.1" />
<rect x="707.6" y="30.6" width="5.8" height="4.6" stroke="#1e8fe0" fill="#9ccbf0" stroke-width="1" rx="0"/>
<path d="M700.4 33.2H706.2M704.4 31.4L706.4 33.2L704.4 35" stroke="#1e8fe0" fill="none" stroke-width="1" />
<rect x="701.2" y="52" width="4.2" height="4.2" stroke="#b3b3b3" fill="#efefef" stroke-width="0.9" rx="0"/>
<rect x="709" y="48.6" width="4.4" height="4.4" stroke="#b3b3b3" fill="#efefef" stroke-width="0.9" rx="0"/>
<rect x="709" y="55.8" width="4.4" height="4.4" stroke="#b3b3b3" fill="#efefef" stroke-width="0.9" rx="0"/>
<path d="M705.4 54.1H707.2V50.8H709M707.2 54.1V58H709" stroke="#b3b3b3" fill="none" stroke-width="0.9" />
<path d="M701.6 71.4L707.6 69.2L713.4 71.6V79.4L707.6 81L701.6 78.8Z" stroke="#4ea72e" fill="#4ea72e" stroke-width="0.8" stroke-linejoin="round"/>
<path d="M707.6 72.4H712.6V79H707.6ZM707.6 74.6H712.6M707.6 76.8H712.6M710.1 72.4V79" stroke="#d9f0cf" fill="none" stroke-width="0.7" />
<path d="M703.4 73.2V77.2M705.4 72.6V77.8" stroke="#d9f0cf" fill="none" stroke-width="0.7" />
<rect x="742.2" y="30.6" width="21.6" height="16.8" stroke="#484848" fill="#ffffff" stroke-width="1" rx="0"/>
<path d="M742.2 36.2H763.8M742.2 41.8H763.8M750 30.6V47.4M757 30.6V47.4" stroke="#808080" fill="none" stroke-width="0.8" />
<rect x="742.2" y="30.6" width="7.8" height="5.6" stroke="#1e8fe0" fill="#4ea3e6" stroke-width="0.8" rx="0"/>
<rect x="742.2" y="41.8" width="7.8" height="5.6" stroke="#1e8fe0" fill="#4ea3e6" stroke-width="0.8" rx="0"/>
<rect x="757.6" y="38.6" width="8.6" height="13" stroke="none" fill="#ffffff" stroke-width="0" rx="0"/>
<path d="M759.4 41.6C759.4 38.2 765.4 38.2 765.4 41.8C765.4 44.4 762.2 44.4 762.2 47.4" stroke="#1e8fe0" fill="none" stroke-width="1.2" stroke-linecap="round"/>
<circle cx="762.2" cy="50.4" r="0.8" stroke="#1e8fe0" fill="#1e8fe0" stroke-width="0.3"/>
<path d="M768.7 70.6L770.6 72.6L772.5 70.6" stroke="#484848" fill="none" stroke-width="1.1" stroke-linecap="round" stroke-linejoin="round"/>
<path d="M786.6 28.8H808.4V44.6H794.8L791.6 48H786.6Z" stroke="#484848" fill="#ffffff" stroke-width="1" stroke-linejoin="round"/>
<path d="M786.6 34H808.4M786.6 39.4H808.4M786.6 44.6H794.8M794 28.8V44.6M801.2 28.8V44.6" stroke="#808080" fill="none" stroke-width="0.8" />
<path d="M787 42.4L790.4 38.8L793.2 40.8L796.8 36.6" stroke="#1e8fe0" fill="none" stroke-width="1.3" stroke-linejoin="round"/>
<path d="M796.8 36.6L800.4 35.2L803 36L806.8 31.8" stroke="#e8384a" fill="none" stroke-width="1.3" stroke-linejoin="round"/>
<path d="M803.8 31.4H807.2V34.8" stroke="#e8384a" fill="none" stroke-width="1.1" />
<rect x="847" y="27.6" width="7.4" height="18.8" stroke="#484848" fill="#ffffff" stroke-width="1" rx="0"/>
<path d="M847 32.3H854.4M847 37H854.4M847 41.7H854.4" stroke="#808080" fill="none" stroke-width="0.9" />
<path d="M844.2 28.4H839.2V33.4M839.2 40.6V45.6H844.2" stroke="#484848" fill="none" stroke-width="0.9" />
<rect x="836.2" y="33.6" width="6.2" height="6.6" stroke="#484848" fill="#ffffff" stroke-width="1" rx="0"/>
<path d="M837.6 36.9H841M839.3 35.2V38.6" stroke="#1e8fe0" fill="none" stroke-width="1.1" />
<path d="M843.1 70.0L845 72.0L846.9 70.0" stroke="#484848" fill="none" stroke-width="1.1" stroke-linecap="round" stroke-linejoin="round"/>
<rect x="878" y="28.4" width="8.4" height="9" stroke="#b9b9b9" fill="#ffffff" stroke-width="0.8" rx="0"/>
<path d="M878 30.8H886.4M878 33.2H882M878 35.4H882M880.8 28.4V37.4M883.6 28.4V31" stroke="#b9b9b9" fill="none" stroke-width="0.7" />
<rect x="882.2" y="31.8" width="7.6" height="7.8" stroke="#8a8a8a" fill="#ffffff" stroke-width="0.8" rx="0"/>
<path d="M882.2 32.6H889.8" stroke="#2f7fd1" fill="none" stroke-width="1.8" />
<path d="M882.2 36H889.8M884.8 33.6V39.6" stroke="#b9b9b9" fill="none" stroke-width="0.6" />
<path d="M1002.5 88.0L1006 91.6L1009.5 88.0" stroke="#484848" fill="none" stroke-width="1.1" stroke-linecap="round" stroke-linejoin="round"/>
<path d="M875 4.6H883V10.2H878.6L876.6 12.4V10.2H875Z" stroke="#484848" fill="none" stroke-width="1" stroke-linejoin="round"/>
<path d="M959.8 7.4H957.7V13.2H965V11.4" stroke="#fff" fill="none" stroke-width="1" stroke-linejoin="round" stroke-linecap="round"/>
<path d="M960.6 11C960.8 8.6 962.2 7.4 964.8 7.3" stroke="#fff" fill="none" stroke-width="1" stroke-linecap="round"/>
<path d="M963.2 5.1L965.7 7.3L963.2 9.5" stroke="#fff" fill="none" stroke-width="1" stroke-linejoin="round" stroke-linecap="round"/>
<path d="M1005.3 7.9L1007.4 10.1L1009.5 7.9" stroke="#fff" fill="none" stroke-width="1.1" stroke-linecap="round" stroke-linejoin="round"/>
<rect x="13.2" y="110.8" width="12.2" height="10" stroke="#505050" fill="#fafafa" stroke-width="1" rx="0"/>
<path d="M13.2 111.4H25.4" stroke="#505050" fill="none" stroke-width="1.7" />
<rect x="15.2" y="114.4" width="3" height="1.4" stroke="#666" fill="none" stroke-width="0.7" rx="0"/>
<rect x="20" y="114.4" width="3.6" height="1.4" stroke="#666" fill="none" stroke-width="0.7" rx="0"/>
<path d="M15.2 118.4H18.2" stroke="#666" fill="none" stroke-width="0.8" />
<rect x="20" y="117.4" width="3.6" height="1.6" stroke="#666" fill="none" stroke-width="0.7" rx="0"/>
<path d="M69 112.9H74.4" stroke="#555" fill="none" stroke-width="0.9" />
<path d="M69.4 114.9H74L71.7 117.2Z" stroke="#555" fill="#555" stroke-width="0.5" stroke-linejoin="round"/>
<path d="M75.0 143.0L78.6 146.8L82.19999999999999 143.0" stroke="#484848" fill="none" stroke-width="1.1" stroke-linecap="round" stroke-linejoin="round"/>
<circle cx="95.3" cy="141" r="0.95" stroke="#484848" fill="#484848" stroke-width="0"/>
<circle cx="95.3" cy="144.1" r="0.95" stroke="#484848" fill="#484848" stroke-width="0"/>
<circle cx="95.3" cy="147.2" r="0.95" stroke="#484848" fill="#484848" stroke-width="0"/>
<path d="M109.6 140.4L117.6 148.4M117.6 140.4L109.6 148.4" stroke="#bdbdbd" fill="none" stroke-width="1" />
<path d="M127 144.8L130.6 148.4L138.6 140.4" stroke="#bdbdbd" fill="none" stroke-width="1" />
<path d="M1006.4 141.6L1009.9 145.20000000000002L1013.4 141.6" stroke="#484848" fill="none" stroke-width="1.1" stroke-linecap="round" stroke-linejoin="round"/>
<path d="M30.6 162.2V178.8H13.6Z" stroke="#d0d0d0" fill="#d0d0d0" stroke-width="0.3" />
<path d="M1012.4 167.8L1016.1 163.2L1019.8 167.8Z" stroke="#707070" fill="#707070" stroke-width="0.4" />
<path d="M1012.8 490.2L1016.1 495.2L1019.4 490.2Z" stroke="#707070" fill="#707070" stroke-width="0.4" />
<path d="M631.4 503.2V509.6L626.6 506.4Z" stroke="#707070" fill="#707070" stroke-width="0.4" />
<path d="M999.6 503.2V509.6L1004.8 506.4Z" stroke="#707070" fill="#707070" stroke-width="0.4" />
<circle cx="613.2" cy="504" r="0.8" stroke="#484848" fill="#484848" stroke-width="0"/>
<circle cx="613.2" cy="506.8" r="0.8" stroke="#484848" fill="#484848" stroke-width="0"/>
<circle cx="613.2" cy="509.6" r="0.8" stroke="#484848" fill="#484848" stroke-width="0"/>
<path d="M18.8 503.6V509L15.6 506.3Z" stroke="#c6c6c6" fill="#c6c6c6" stroke-width="0.4" />
<path d="M34 503.6V509L37.2 506.3Z" stroke="#c6c6c6" fill="#c6c6c6" stroke-width="0.4" />
<circle cx="136.8" cy="506.5" r="5.6" stroke="#555" fill="none" stroke-width="1"/>
<path d="M133.8 506.5H139.8M136.8 503.5V509.5" stroke="#555" fill="none" stroke-width="1" />
<circle cx="48.3" cy="520.5" r="1.4" stroke="#484848" fill="none" stroke-width="0.8"/>
<path d="M44.4 521.6C43 521.6 43 523.4 44.4 523.4L46.6 523.6L45.2 529.4C45 530.6 46.4 530.8 46.8 529.8L48.3 526.4L49.4 528M50 523.6L52.2 523.4C53.6 523.4 53.6 521.6 52.2 521.6Z" stroke="#484848" fill="none" stroke-width="0.8" stroke-linejoin="round" stroke-linecap="round"/>
<path d="M50 523.6L50.6 526" stroke="#484848" fill="none" stroke-width="0.8" />
<path d="M50 525.6L54.2 530M54.2 525.6L50 530" stroke="#484848" fill="none" stroke-width="0.9" />
<rect x="797.6" y="519.8" width="9.6" height="9.6" stroke="#484848" fill="none" stroke-width="1" rx="0"/>
<path d="M797.6 523H807.2M797.6 526.2H807.2M800.8 519.8V529.4M804 519.8V529.4" stroke="#484848" fill="none" stroke-width="1" />
<rect x="829.4" y="519.8" width="10.8" height="9.6" stroke="#484848" fill="none" stroke-width="1" rx="0"/>
<rect x="832" y="522" width="5.6" height="5.2" stroke="#484848" fill="none" stroke-width="0.9" rx="0"/>
<path d="M833.4 523.8H836.2M833.4 525.6H836.2" stroke="#484848" fill="none" stroke-width="0.7" />
<rect x="861.4" y="519.8" width="10.6" height="9.6" stroke="#484848" fill="none" stroke-width="1" rx="0"/>
<path d="M864.6 519.8V524.6H869V519.8" stroke="#484848" fill="none" stroke-width="1" />
<path d="M887.4 524.6H891.8" stroke="#484848" fill="none" stroke-width="1" />
<path d="M981 524.6H986.4M983.7 521.9V527.3" stroke="#484848" fill="none" stroke-width="1" />
<path d="M937.3 521.6V527.6" stroke="#484848" fill="none" stroke-width="1" /></svg>
<svg class="redbox" width="1024" height="534" viewBox="0 0 1024 534" style="left:0;top:0;pointer-events:none;"><rect x="264.70" y="1.70" width="36.90" height="17.90" fill="none" stroke="#e8141c" stroke-width="2.6"/></svg>
<svg class="redbox" width="1024" height="534" viewBox="0 0 1024 534" style="left:0;top:0;pointer-events:none;"><rect x="869.45" y="22.05" width="91.40" height="25.20" fill="none" stroke="#e8141c" stroke-width="2.5"/></svg>
<svg class="redbox" width="1024" height="534" viewBox="0 0 1024 534" style="left:0;top:0;pointer-events:none;"><rect x="109.55" y="180.35" width="452.30" height="235.00" fill="none" stroke="#e8141c" stroke-width="2.9"/></svg>
<span class="t " style="left:445.20px;top:33px;font-size:7.2px;color:#1e8fe0;font-weight:700;">A</span>
<span class="t " style="left:445.40px;top:40px;font-size:7.2px;color:#444;font-weight:700;">Z</span>
<span class="t " style="left:445.40px;top:59px;font-size:7.2px;color:#444;font-weight:700;">Z</span>
<span class="t " style="left:445.20px;top:66px;font-size:7.2px;color:#1e8fe0;font-weight:700;">A</span>
<span class="t " style="left:470.40px;top:33px;font-size:9.2px;color:#444;">Z</span>
<span class="t " style="left:470.20px;top:41px;font-size:9.2px;color:#1e8fe0;">A</span>
<span class="t " style="left:481.20px;top:33px;font-size:9.2px;color:#1e8fe0;">A</span>
<span class="t " style="left:481.40px;top:41px;font-size:9.2px;color:#444;">Z</span>
<span class="t" style="left:146.8px;top:136.5px;font-family:'Liberation Serif',serif;font-style:italic;font-weight:700;font-size:13.5px;color:#454545;">fx</span>
</body></html>
